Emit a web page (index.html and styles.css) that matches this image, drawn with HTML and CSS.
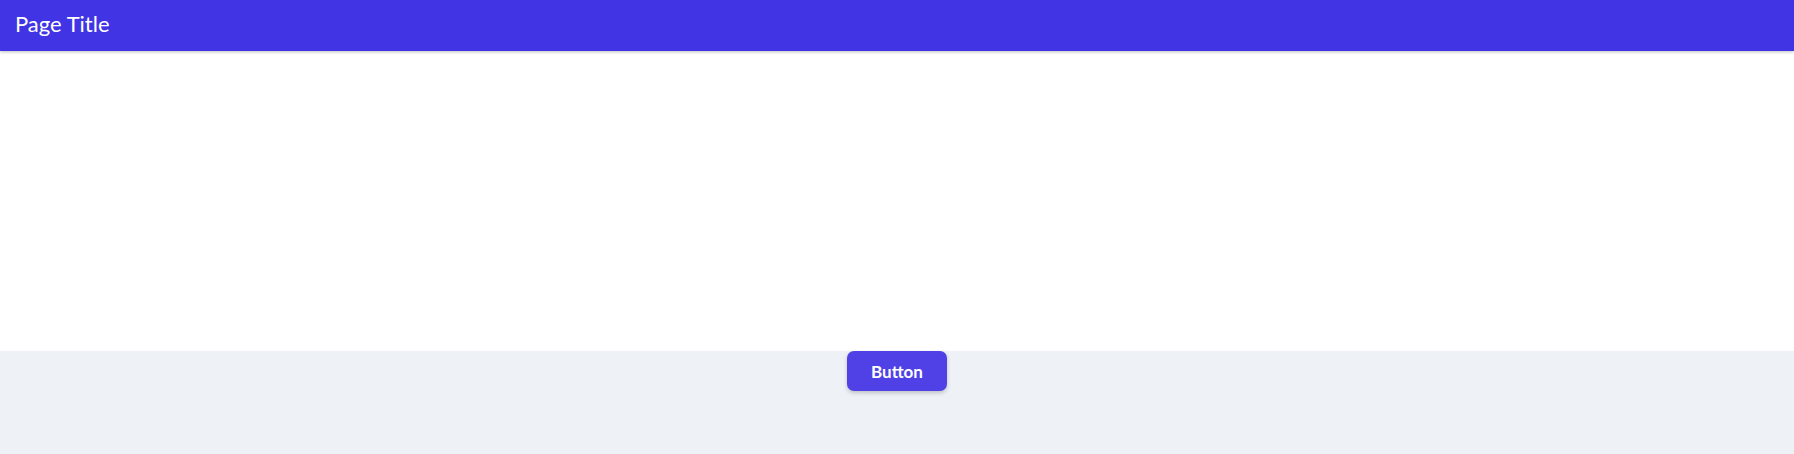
FILE: index.html
```html
<!DOCTYPE html>
<html>
<head>
<meta charset="utf-8">
<link rel="stylesheet" href="styles.css">
</head>
<body>
<header class="topbar"><h1 class="title">Page Title</h1></header>
<main class="content"></main>
<footer class="actions"><button class="btn">Button</button></footer>
</body>
</html>
```
FILE: styles.css
```css
* { box-sizing: border-box; }
html, body { margin: 0; padding: 0; height: 100%; }
body {
  display: flex;
  flex-direction: column;
  font-family: Lato, "Liberation Sans", sans-serif;
  background: #ffffff;
}
.topbar {
  height: 51px;
  background: #4134e4;
  display: flex;
  align-items: center;
  padding: 0 15px 3px;
  box-shadow: 0 1px 3px rgba(0,0,0,0.25);
  position: relative;
  z-index: 1;
}
.title {
  margin: 0;
  color: #ffffff;
  font-size: 22px;
  font-weight: 400;
  line-height: 1;
}
.content {
  height: 300px;
  background: #ffffff;
}
.actions {
  flex: 1;
  background: #eef1f6;
  display: flex;
  justify-content: center;
  align-items: flex-start;
}
.btn {
  width: 100px;
  height: 40px;
  border: none;
  border-radius: 7px;
  background: #4f41e6;
  color: #ffffff;
  font-family: Lato, "Liberation Sans", sans-serif;
  font-weight: 700;
  font-size: 17px;
  box-shadow: 0 2px 4px rgba(0,0,0,0.2);
}
```
